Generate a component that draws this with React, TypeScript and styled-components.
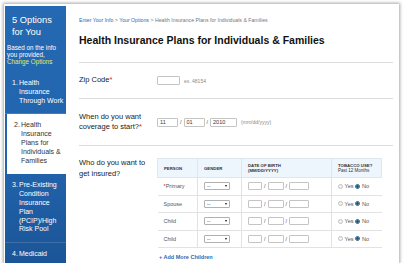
import React from 'react';
import styled, {createGlobalStyle} from 'styled-components';

const GlobalStyle = createGlobalStyle`
  html, body {
    margin: 0;
    padding: 0;
    background: #ffffff;
  }
  body {
    font-family: "Liberation Sans", Arial, sans-serif;
    color: #222;
  }
`

const navItems = [
    {num: '1.', lines: ['Health', 'Insurance', 'Through Work']},
    {num: '2.', lines: ['Health', 'Insurance', 'Plans for', 'Individuals &', 'Families'], active: true},
    {num: '3.', lines: ['Pre-Existing', 'Condition', 'Insurance', 'Plan', '(PCIP)/High', 'Risk Pool']},
    {num: '4.', lines: ['Medicaid']},
];

const people = [
    {name: 'Primary', required: true},
    {name: 'Spouse'},
    {name: 'Child'},
    {name: 'Child'},
];

export default function App() {
    return (
        <>
            <GlobalStyle/>
            <Card>
                <Sidebar>
                    <SideTitle>5 Options<br/>for You</SideTitle>
                    <SideText>
                        Based on the info<br/>you provided,<br/>
                        <ChangeLink>Change Options</ChangeLink>
                    </SideText>
                    <NavList>
                        {navItems.map((item, index) => (
                            <NavItem key={index} $active={!!item.active}>
                                <NavNum>{item.num}</NavNum>
                                <NavLabel>
                                    {item.lines.map((line, i) => <div key={i}>{line}</div>)}
                                </NavLabel>
                            </NavItem>
                        ))}
                    </NavList>
                </Sidebar>
                <Main>
                    <Breadcrumb>
                        <CrumbLink>Enter Your Info</CrumbLink> &gt; <CrumbLink>Your Options</CrumbLink> &gt; Health
                        Insurance Plans for Individuals &amp; Families
                    </Breadcrumb>
                    <Heading>Health Insurance Plans for Individuals &amp; Families</Heading>

                    <Section $height={35}>
                        <Label>Zip Code<Req>*</Req></Label>
                        <Field>
                            <TextBox $w={23}/>
                            <Hint>ex. 48154</Hint>
                        </Field>
                    </Section>

                    <Section $height={46}>
                        <Label>When do you want<br/>coverage to start?<Req>*</Req></Label>
                        <Field>
                            <TextBox $w={21}>11</TextBox>
                            <Slash>/</Slash>
                            <TextBox $w={21}>01</TextBox>
                            <Slash>/</Slash>
                            <TextBox $w={27}>2010</TextBox>
                            <Hint>(mm/dd/yyyy)</Hint>
                        </Field>
                    </Section>

                    <PeopleSection>
                        <Label>Who do you want to<br/>get insured?</Label>
                        <div>
                            <Table>
                                <colgroup>
                                    <col style={{width: 40}}/>
                                    <col style={{width: 44}}/>
                                    <col style={{width: 90}}/>
                                    <col style={{width: 50}}/>
                                </colgroup>
                                <thead>
                                <tr>
                                    <Th>Person</Th>
                                    <Th>Gender</Th>
                                    <Th>Date of Birth<br/><span>(MM/DD/YYYY)</span></Th>
                                    <Th>Tobacco Use?<br/><Sub>Past 12 Months</Sub></Th>
                                </tr>
                                </thead>
                                <tbody>
                                {people.map((p, index) => (
                                    <tr key={index}>
                                        <Td>{p.required && <Req>*</Req>}{p.name}</Td>
                                        <Td>
                                            <Select>
                                                <span>--</span>
                                                <Caret/>
                                            </Select>
                                        </Td>
                                        <Td>
                                            <Field>
                                                <TextBox $w={14} $h={8}/>
                                                <Slash>/</Slash>
                                                <TextBox $w={16} $h={8}/>
                                                <Slash>/</Slash>
                                                <TextBox $w={20} $h={8}/>
                                            </Field>
                                        </Td>
                                        <Td>
                                            <Field>
                                                <Radio/>
                                                <RadioText>Yes</RadioText>
                                                <Radio $checked/>
                                                <RadioText>No</RadioText>
                                            </Field>
                                        </Td>
                                    </tr>
                                ))}
                                </tbody>
                            </Table>
                            <AddMore>+ Add More Children</AddMore>
                        </div>
                    </PeopleSection>
                </Main>
            </Card>
        </>
    );
}

const Card = styled.div`
  display: flex;
  width: 395px;
  height: 259px;
  margin: 4px 0 0 4px;
  padding: 2px 0 0 1px;
  box-sizing: border-box;
  background: #fff;
  box-shadow: 0 0 3px 1px rgba(0, 0, 0, 0.35);
  overflow: hidden;
`

const Sidebar = styled.aside`
  width: 61px;
  flex-shrink: 0;
  display: flex;
  flex-direction: column;
  background: linear-gradient(180deg, #2569b3 0%, #2164ad 60%, #1b5597 100%);
  color: #fff;
`

const SideTitle = styled.div`
  padding: 9px 4px 0 7px;
  font-size: 9.3px;
  line-height: 11.5px;
`

const SideText = styled.div`
  padding: 6px 2px 0 2px;
  font-size: 6.3px;
  line-height: 7px;
`

const ChangeLink = styled.span`
  color: #e6ea5c;
`

const NavList = styled.ul`
  list-style: none;
  margin: 7px 0 0;
  padding: 0;
`

const NavItem = styled.li<{ $active: boolean }>`
  display: flex;
  padding: 7px 3px 8px 7px;
  margin-left: ${p => p.$active ? '2px' : '0'};
  font-size: 7px;
  line-height: 8.8px;
  background: ${p => p.$active ? '#fff' : 'transparent'};
  color: ${p => p.$active ? '#333' : '#fff'};
  border-bottom: 1px solid ${p => p.$active ? '#fff' : 'rgba(255,255,255,0.15)'};
`

const NavNum = styled.span`
  width: 7px;
  flex-shrink: 0;
`

const NavLabel = styled.div`
  white-space: nowrap;
`

const Main = styled.main`
  flex: 1;
  padding: 0 6px 0 13px;
`

const Breadcrumb = styled.div`
  margin-top: 11px;
  font-size: 5.2px;
  line-height: 6px;
  color: #777;
  white-space: nowrap;
`

const CrumbLink = styled.span`
  color: #2a6bb5;
`

const Heading = styled.h1`
  margin: 11px 0 15px;
  font-size: 10.5px;
  line-height: 13px;
  font-weight: bold;
  color: #111;
`

const Section = styled.section<{ $height: number }>`
  display: grid;
  grid-template-columns: 78px 1fr;
  align-items: center;
  height: ${p => p.$height}px;
  border-top: 1px solid #dcdcdc;
`

const PeopleSection = styled.section`
  display: grid;
  grid-template-columns: 78px 1fr;
  align-items: start;
  padding-top: 12px;
  border-top: 1px solid #dcdcdc;
`

const Label = styled.div`
  font-size: 7.5px;
  line-height: 10.5px;
  color: #222;
`

const Req = styled.span`
  color: #e0281e;
`

const Field = styled.div`
  display: flex;
  align-items: center;
`

const TextBox = styled.span<{ $w: number; $h?: number }>`
  display: inline-block;
  box-sizing: border-box;
  width: ${p => p.$w}px;
  height: ${p => p.$h ?? 9}px;
  padding: 0 2px;
  border: 1px solid #c4c4c4;
  border-radius: 1px;
  background: #fff;
  font-size: 5.5px;
  line-height: 7px;
  color: #333;
`

const Slash = styled.span`
  margin: 0 2px;
  font-size: 5.5px;
  color: #555;
`

const Hint = styled.span`
  margin-left: 4px;
  font-size: 5px;
  color: #888;
`

const Table = styled.table`
  width: 224px;
  border-collapse: collapse;
  table-layout: fixed;
`

const Th = styled.th`
  height: 18px;
  padding: 0 0 0 6px;
  background: #edf5fd;
  border: 1px solid #dfe6ee;
  text-align: left;
  font-size: 4.3px;
  line-height: 5px;
  font-weight: bold;
  text-transform: uppercase;
  color: #333;
`

const Sub = styled.span`
  font-weight: normal;
  text-transform: none;
  font-size: 4.5px;
`

const Td = styled.td`
  height: 16.5px;
  padding: 0 0 0 6px;
  border: 1px solid #e2e2e2;
  font-size: 5.5px;
  color: #555;

  &:first-child {
    border-left: none;
  }

  &:last-child {
    border-right: none;
  }
`

const Select = styled.span`
  display: flex;
  align-items: center;
  justify-content: space-between;
  box-sizing: border-box;
  width: 26px;
  height: 8px;
  padding: 0 2px;
  border: 1px solid #b0b0b0;
  border-radius: 1px;
  font-size: 5px;
  color: #333;
`

const Caret = styled.span`
  width: 0;
  height: 0;
  border-left: 1.5px solid transparent;
  border-right: 1.5px solid transparent;
  border-top: 2px solid #111;
`

const Radio = styled.span<{ $checked?: boolean }>`
  box-sizing: border-box;
  width: 5px;
  height: 5px;
  border-radius: 50%;
  margin-right: 1.5px;
  border: 1px solid ${p => p.$checked ? '#3f6f86' : '#c0c0c0'};
  background: ${p => p.$checked ? 'radial-gradient(circle, #1f5f80 0 55%, #6c9bb3 60%)' : '#f4f4f4'};
`

const RadioText = styled.span`
  margin-right: 2px;
  font-size: 5.5px;
  color: #555;
`

const AddMore = styled.div`
  margin: 6px 0 0 2px;
  font-size: 5.5px;
  font-weight: bold;
  color: #2a6bb5;
`
